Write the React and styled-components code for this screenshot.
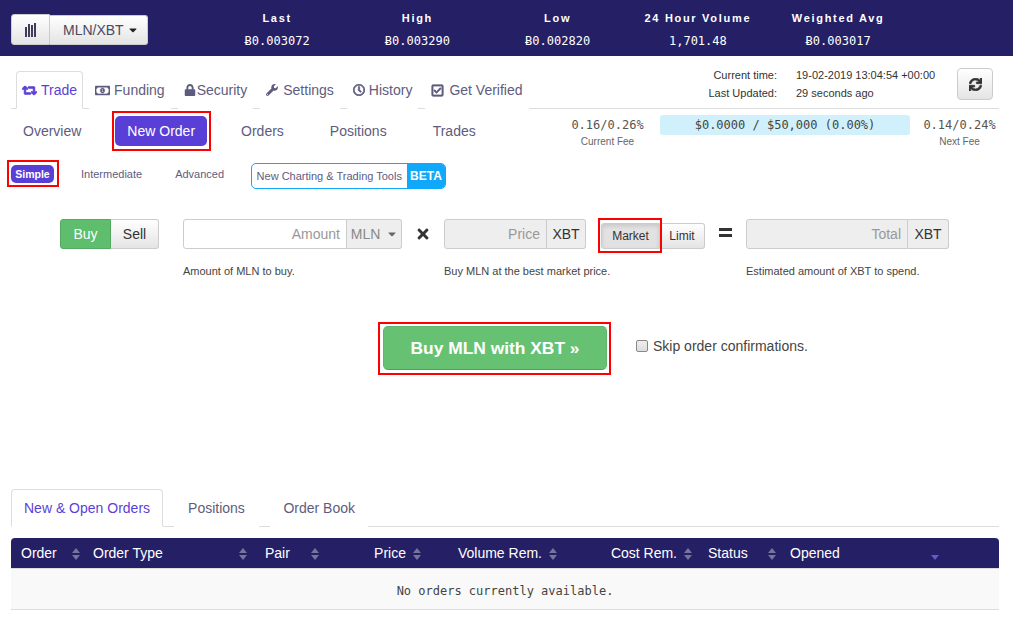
import React from 'react';
import styled, { createGlobalStyle } from 'styled-components';
import {
  FaRetweet, FaRegMoneyBillAlt, FaLock, FaWrench, FaRegClock, FaRegCheckSquare,
  FaSync, FaTimes, FaCaretDown,
} from 'react-icons/fa';

const mono = '"DejaVu Sans Mono", "Liberation Mono", monospace';
const navy = '#251f66';
const violet = '#5a3fd6';
const muted = '#5e5c7e';

const Global = createGlobalStyle`
  html, body { margin: 0; padding: 0; background: #fff; }
  body { font-family: "Liberation Sans", Arial, sans-serif; font-size: 14px; color: #333; overflow: hidden; }
  * { box-sizing: border-box; }
`;

const Marked = styled.span`
  position: relative;
  display: inline-flex;
  &::after {
    content: "";
    position: absolute;
    inset: ${p => p.$inset};
    border: 2px solid #f00;
    pointer-events: none;
    z-index: 2;
  }
`;

/* ---------- ticker ---------- */
const Ticker = styled.header`
  height: 56px;
  background: ${navy};
  display: flex;
  align-items: flex-start;
  padding-left: 11px;
`;
const PairGroup = styled.div`
  display: flex;
  align-items: flex-end;
  height: 31px;
  margin-top: 14px;
  margin-right: 59px;
`;
const PairButton = styled.button`
  height: ${p => (p.$joined ? 30 : 31)}px;
  width: ${p => p.$w}px;
  padding: 0 0 0 ${p => (p.$joined ? 13 : 0)}px;
  display: flex;
  align-items: center;
  justify-content: ${p => (p.$joined ? 'flex-start' : 'center')};
  gap: 3px;
  font: 14px "Liberation Sans", sans-serif;
  color: #4a4a60;
  background: linear-gradient(#fff, #e4e4e4);
  border: 1px solid #ccc;
  border-left-width: ${p => (p.$joined ? 0 : 1)}px;
  border-radius: ${p => (p.$joined ? '0 3px 3px 0' : '3px 0 0 3px')};
`;
const Stats = styled.div`
  display: grid;
  grid-template-columns: repeat(5, 140.25px);
  padding-top: 11px;
`;
const Stat = styled.div`
  text-align: center;
  color: #fff;
`;
const StatLabel = styled.div`
  font-size: 11px;
  font-weight: 700;
  letter-spacing: 1.7px;
  line-height: 14px;
  margin-bottom: 9px;
  white-space: nowrap;
`;
const StatValue = styled.div`
  font: 12px/14px ${mono};
`;

/* ---------- main tabs ---------- */
const Content = styled.div`
  padding: 0 14px 0 11px;
`;
const TabBar = styled.div`
  display: flex;
  align-items: flex-end;
  justify-content: space-between;
  height: 38px;
  margin-top: 15px;
  border-bottom: 1px solid #ddd;
`;
const MainTabs = styled.nav`
  display: flex;
  gap: 7px;
  padding-left: 5px;
`;
const MainTab = styled.a`
  display: flex;
  align-items: center;
  gap: ${p => p.$gap ?? 4}px;
  height: 38px;
  padding: 0 5px;
  margin-bottom: -1px;
  font-size: 14px;
  color: ${p => (p.$active ? violet : muted)};
  background: #fff;
  border: 1px solid ${p => (p.$active ? '#ddd' : 'transparent')};
  border-bottom-color: ${p => (p.$active ? '#fff' : 'transparent')};
  border-radius: 4px 4px 0 0;
  &:first-child { margin-right: -1px; }
  svg {
    flex: none;
    font-size: ${p => p.$icon || 14}px;
    stroke: currentColor;
    stroke-width: ${p => p.$bold ?? 0}px;
  }
`;
const TimeBlock = styled.div`
  display: flex;
  align-items: flex-start;
  align-self: flex-start;
  margin-top: -2px;
`;
const TimeGrid = styled.dl`
  display: grid;
  grid-template-columns: auto 138px;
  column-gap: 19px;
  row-gap: 6px;
  margin: 0 23px 0 0;
  font-size: 11px;
  line-height: 12px;
  color: #333;
`;
const TimeLabel = styled.dt`
  text-align: right;
`;
const TimeValue = styled.dd`
  margin: 0;
  white-space: nowrap;
`;
const RefreshButton = styled.button`
  width: 36px;
  height: 32px;
  margin-top: -1px;
  margin-right: 6px;
  padding: 0;
  display: flex;
  align-items: center;
  justify-content: center;
  color: #333;
  background: linear-gradient(#fff, #e4e4e4);
  border: 1px solid #ccc;
  border-radius: 4px;
  svg { font-size: 13px; stroke: currentColor; stroke-width: 28px; }
`;

/* ---------- sub nav ---------- */
const NavRow = styled.div`
  display: flex;
  justify-content: space-between;
  align-items: flex-start;
  margin-top: 7px;
  height: 30px;
`;
const Pills = styled.nav`
  display: flex;
  gap: 22px;
`;
const Pill = styled.a`
  display: flex;
  align-items: center;
  height: 30px;
  padding: 0 12px;
  font-size: 14px;
  border-radius: 5px;
  color: ${p => (p.$active ? '#fff' : muted)};
  background: ${p => (p.$active ? violet : 'transparent')};
`;
const FeeArea = styled.div`
  display: flex;
  align-items: flex-start;
  gap: 13px;
  padding-right: 3px;
`;
const Fee = styled.div`
  width: 73px;
  text-align: center;
`;
const FeeValue = styled.div`
  font: 12px/18px ${mono};
  color: #555;
  white-space: nowrap;
`;
const FeeLabel = styled.div`
  font-size: 10px;
  line-height: 12px;
  margin-top: 2px;
  color: #666;
`;
const VolumeBar = styled.div`
  width: 250px;
  height: 20px;
  margin: -1px 0 0 3px;
  border-radius: 3px;
  background: #d0f1fb;
  color: #444;
  text-align: center;
  font: 12px/20px ${mono};
`;

const ModeRow = styled.div`
  display: flex;
  align-items: flex-start;
  height: 26px;
  margin-top: 17px;
`;
const ModePill = styled.a`
  display: flex;
  align-items: center;
  justify-content: center;
  height: 18px;
  padding: 0 ${p => (p.$active ? 0 : 5)}px;
  width: ${p => (p.$active ? '43px' : 'auto')};
  margin: ${p => (p.$active ? 0 : 2)}px ${p => p.$mr ?? 0}px 0 ${p => p.$ml ?? 0}px;
  font-size: ${p => (p.$active ? 10.5 : 11)}px;
  border-radius: 5px;
  color: ${p => (p.$active ? '#fff' : muted)};
  background: ${p => (p.$active ? violet : 'transparent')};
  font-weight: ${p => (p.$active ? 700 : 400)};
`;
const SimpleSlot = styled.span`
  display: inline-flex;
  margin-top: 2px;
`;
const BetaLink = styled.a`
  display: flex;
  align-items: stretch;
  height: 26px;
  border: 1px solid #10a8fb;
  border-radius: 5px;
  overflow: hidden;
  font-size: 11px;
`;
const BetaText = styled.span`
  display: flex;
  align-items: center;
  padding: 0 5px 1px;
  color: ${muted};
`;
const BetaTag = styled.span`
  display: flex;
  align-items: center;
  width: 38px;
  justify-content: center;
  background: #10a8fb;
  color: #fff;
  font-weight: 700;
  font-size: 12px;
`;

/* ---------- order form ---------- */
const FormRow = styled.section`
  display: flex;
  align-items: flex-start;
  margin-top: 30px;
  padding-left: 49px;
`;
const SideGroup = styled.div`
  display: flex;
  height: 30px;
  margin-right: 24px;
`;
const SideButton = styled.button`
  width: ${p => p.$w}px;
  padding: 0;
  font: 14px "Liberation Sans", sans-serif;
  color: ${p => (p.$on ? '#fff' : '#333')};
  background: ${p => (p.$on ? '#5fbd6e' : 'linear-gradient(#fff, #e4e4e4)')};
  border: 1px solid ${p => (p.$on ? '#55a863' : '#ccc')};
  border-left-width: ${p => (p.$on ? 1 : 0)}px;
  border-radius: ${p => (p.$on ? '3px 0 0 3px' : '0 3px 3px 0')};
`;
const FieldCol = styled.div`
  width: ${p => p.$w}px;
  flex: none;
`;
const InputGroup = styled.div`
  display: flex;
  height: 30px;
`;
const Input = styled.div`
  flex: 1;
  display: flex;
  align-items: center;
  justify-content: flex-end;
  padding: 0 6px;
  font-size: 14px;
  color: #999;
  background: ${p => (p.$disabled ? '#eee' : '#fff')};
  border: 1px solid #ccc;
  border-radius: 3px 0 0 3px;
`;
const Addon = styled.div`
  width: ${p => p.$w}px;
  display: flex;
  align-items: center;
  justify-content: center;
  gap: 6px;
  padding-left: ${p => (p.$dim ? 1 : 0)}px;
  font-size: 14px;
  color: ${p => (p.$dim ? '#888' : '#333')};
  background: #eee;
  border: 1px solid #ccc;
  border-left: 0;
  border-radius: 0 3px 3px 0;
  svg { font-size: 12px; color: #666; }
`;
const Help = styled.div`
  margin-top: 16px;
  font-size: 11px;
  line-height: 12px;
  color: #444;
  white-space: nowrap;
`;
const Operator = styled.div`
  width: ${p => p.$w}px;
  height: 30px;
  flex: none;
  display: flex;
  align-items: center;
  justify-content: center;
  color: #333;
  font-size: 16px;
`;
const EqualsGlyph = styled.span`
  display: block;
  width: 13px;
  height: 9px;
  margin-top: -3px;
  border-top: 3px solid #333;
  border-bottom: 3px solid #333;
`;
const MarketGroup = styled.div`
  display: flex;
  width: 104px;
  height: 26px;
  margin: 4px 0 0 15px;
  flex: none;
`;
const MarketButton = styled.button`
  height: 26px;
  width: ${p => p.$w}px;
  padding: 0;
  font: 12px "Liberation Sans", sans-serif;
  color: #333;
  background: ${p => (p.$on ? '#e2e2e2' : 'linear-gradient(#fff, #e4e4e4)')};
  box-shadow: ${p => (p.$on ? 'inset 0 2px 4px rgba(0,0,0,.12)' : 'none')};
  border: 1px solid #ccc;
  border-left-width: ${p => (p.$on ? 1 : 0)}px;
  border-radius: ${p => (p.$on ? '3px 0 0 3px' : '0 3px 3px 0')};
`;
const ActionRow = styled.section`
  display: flex;
  align-items: flex-start;
  margin-top: 49px;
  padding-left: 372px;
`;
const SubmitButton = styled.button`
  width: 224px;
  height: 44px;
  padding: 0;
  font: 700 17.4px "Liberation Sans", sans-serif;
  color: #fff;
  background: #66c272;
  border: 1px solid #62b56d;
  border-bottom-color: #4f9f5a;
  border-radius: 5px;
`;
const SkipLabel = styled.label`
  display: flex;
  align-items: center;
  gap: 5px;
  margin: 12px 0 0 29px;
  height: 16px;
  font-size: 14px;
  color: #444;
`;
const SkipBox = styled.input`
  appearance: none;
  width: 12px;
  height: 12px;
  margin: 0;
  border: 1px solid #888;
  border-radius: 2px;
  background: linear-gradient(#eee, #ddd);
`;

/* ---------- orders ---------- */
const LowerTabs = styled.nav`
  display: flex;
  gap: 11px;
  height: 38px;
  margin-top: 119px;
  border-bottom: 1px solid #ddd;
`;
const LowerTab = styled.a`
  display: flex;
  align-items: center;
  height: 38px;
  padding: 0 ${p => p.$pad}px;
  font-size: 14px;
  color: ${p => (p.$active ? violet : muted)};
  background: #fff;
  border: 1px solid ${p => (p.$active ? '#ddd' : 'transparent')};
  border-bottom-color: ${p => (p.$active ? '#fff' : 'transparent')};
  border-radius: 4px 4px 0 0;
`;
const TableHead = styled.div`
  display: grid;
  grid-template-columns: 72px 172px 68px 102px 136px 137px 82px 1fr;
  height: 31px;
  margin-top: 11px;
  background: ${navy};
  border-radius: 4px 4px 0 0;
  border-bottom: 1px solid #ddd;
`;
const HeadCell = styled.div`
  display: flex;
  align-items: center;
  justify-content: ${p => (p.$right ? 'flex-end' : 'space-between')};
  gap: 7px;
  padding: 0 ${p => p.$pad}px 0 10px;
  font-size: 14px;
  color: #fff;
  svg { flex: none; }
`;
const EmptyRow = styled.div`
  height: 41px;
  background: #f9f9f9;
  border-bottom: 1px solid #ddd;
  text-align: center;
  font: 12px/44px ${mono};
  color: #444;
`;

const SortIcon = ({ only }) => (
  <svg width="8" height="12" viewBox="0 0 8 12" style={{ marginTop: 1 }}>
    {!only && <path d="M4 0L8 5H0Z" fill="#76749a" />}
    <path d="M0 7H8L4 12Z" fill={only ? '#6a56c8' : '#76749a'} />
  </svg>
);

const BarsIcon = () => (
  <svg width="12" height="14" viewBox="0 0 12 14" fill="#443a5c">
    <rect x="0" y="4" width="2" height="10" />
    <rect x="3" y="1" width="2" height="13" />
    <rect x="6" y="2" width="2" height="12" />
    <rect x="9" y="0" width="2" height="14" />
  </svg>
);

const stats = [
  ['Last', 'Ƀ0.003072'],
  ['High', 'Ƀ0.003290'],
  ['Low', 'Ƀ0.002820'],
  ['24 Hour Volume', '1,701.48'],
  ['Weighted Avg', 'Ƀ0.003017'],
];

const heads = [
  ['Order', 3],
  ['Order Type', 8],
  ['Pair', 4],
  ['Price', 4, true],
  ['Volume Rem.', 4, true],
  ['Cost Rem.', 6, true],
  ['Status', 4],
  ['Opened', 60, false, true],
];

export default function App() {
  return (
    <>
      <Global />
      <Ticker>
        <PairGroup>
          <PairButton $w={39}><BarsIcon /></PairButton>
          <PairButton $w={98} $joined>MLN/XBT <FaCaretDown size={12} color="#222" /></PairButton>
        </PairGroup>
        <Stats>
          {stats.map(([label, value]) => (
            <Stat key={label}>
              <StatLabel>{label}</StatLabel>
              <StatValue>{value}</StatValue>
            </Stat>
          ))}
        </Stats>
      </Ticker>
      <Content>
        <TabBar>
          <MainTabs>
            <MainTab $active $icon={15} $bold={40}><FaRetweet />Trade</MainTab>
            <MainTab $icon={15} $bold={20}><FaRegMoneyBillAlt />Funding</MainTab>
            <MainTab $icon={12} $gap={1}><FaLock />Security</MainTab>
            <MainTab $icon={12} $gap={5}><FaWrench />Settings</MainTab>
            <MainTab $icon={12} $bold={30}><FaRegClock />History</MainTab>
            <MainTab $icon={13} $gap={5} $bold={30}><FaRegCheckSquare />Get Verified</MainTab>
          </MainTabs>
          <TimeBlock>
            <TimeGrid>
              <TimeLabel>Current time:</TimeLabel>
              <TimeValue>19-02-2019 13:04:54 +00:00</TimeValue>
              <TimeLabel>Last Updated:</TimeLabel>
              <TimeValue>29 seconds ago</TimeValue>
            </TimeGrid>
            <RefreshButton aria-label="Refresh"><FaSync /></RefreshButton>
          </TimeBlock>
        </TabBar>
        <NavRow>
          <Pills>
            <Pill>Overview</Pill>
            <Marked $inset="-5px -4px -5px -3px"><Pill $active>New Order</Pill></Marked>
            <Pill>Orders</Pill>
            <Pill>Positions</Pill>
            <Pill>Trades</Pill>
          </Pills>
          <FeeArea>
            <Fee>
              <FeeValue>0.16/0.26%</FeeValue>
              <FeeLabel>Current Fee</FeeLabel>
            </Fee>
            <VolumeBar>$0.0000 / $50,000 (0.00%)</VolumeBar>
            <Fee>
              <FeeValue>0.14/0.24%</FeeValue>
              <FeeLabel>Next Fee</FeeLabel>
            </Fee>
          </FeeArea>
        </NavRow>
        <ModeRow>
          <SimpleSlot>
            <Marked $inset="-5px -5px -4px -4px"><ModePill $active>Simple</ModePill></Marked>
          </SimpleSlot>
          <ModePill $ml={22} $mr={23}>Intermediate</ModePill>
          <ModePill $mr={21.5}>Advanced</ModePill>
          <BetaLink>
            <BetaText>New Charting &amp; Trading Tools</BetaText>
            <BetaTag>BETA</BetaTag>
          </BetaLink>
        </ModeRow>
        <FormRow>
          <SideGroup>
            <SideButton $on $w={51}>Buy</SideButton>
            <SideButton $w={48}>Sell</SideButton>
          </SideGroup>
          <FieldCol $w={219}>
            <InputGroup>
              <Input>Amount</Input>
              <Addon $w={55} $dim>MLN <FaCaretDown /></Addon>
            </InputGroup>
            <Help>Amount of MLN to buy.</Help>
          </FieldCol>
          <Operator $w={42}><FaTimes /></Operator>
          <FieldCol $w={142}>
            <InputGroup>
              <Input $disabled>Price</Input>
              <Addon $w={39}>XBT</Addon>
            </InputGroup>
            <Help>Buy MLN at the best market price.</Help>
          </FieldCol>
          <MarketGroup>
            <Marked $inset="-5px -2px -4px -3px"><MarketButton $on $w={59}>Market</MarketButton></Marked>
            <MarketButton $w={45}>Limit</MarketButton>
          </MarketGroup>
          <Operator $w={41}><EqualsGlyph /></Operator>
          <FieldCol $w={203}>
            <InputGroup>
              <Input $disabled>Total</Input>
              <Addon $w={41}>XBT</Addon>
            </InputGroup>
            <Help>Estimated amount of XBT to spend.</Help>
          </FieldCol>
        </FormRow>
        <ActionRow>
          <Marked $inset="-4px -4px -5px -5px"><SubmitButton>Buy MLN with XBT »</SubmitButton></Marked>
          <SkipLabel><SkipBox type="checkbox" />Skip order confirmations.</SkipLabel>
        </ActionRow>
        <LowerTabs>
          <LowerTab $active $pad={12}>New &amp; Open Orders</LowerTab>
          <LowerTab $pad={13}>Positions</LowerTab>
          <LowerTab $pad={12.5}>Order Book</LowerTab>
        </LowerTabs>
        <TableHead>
          {heads.map(([label, pad, right, only]) => (
            <HeadCell key={label} $pad={pad} $right={right}>
              {label}
              <SortIcon only={only} />
            </HeadCell>
          ))}
        </TableHead>
        <EmptyRow>No orders currently available.</EmptyRow>
      </Content>
    </>
  );
}
